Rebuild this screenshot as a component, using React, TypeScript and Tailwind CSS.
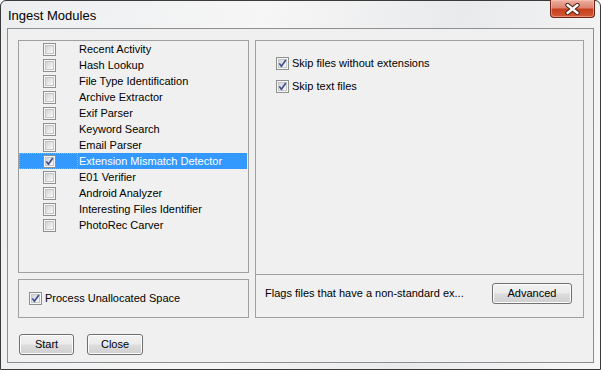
import { useId } from "react";

const modules = [
  { name: "Recent Activity", checked: false },
  { name: "Hash Lookup", checked: false },
  { name: "File Type Identification", checked: false },
  { name: "Archive Extractor", checked: false },
  { name: "Exif Parser", checked: false },
  { name: "Keyword Search", checked: false },
  { name: "Email Parser", checked: false },
  { name: "Extension Mismatch Detector", checked: true },
  { name: "E01 Verifier", checked: false },
  { name: "Android Analyzer", checked: false },
  { name: "Interesting Files Identifier", checked: false },
  { name: "PhotoRec Carver", checked: false },
];

const selectedIndex = 7;

const CheckBox = ({ checked }: { checked: boolean }) => {
  const id = useId();
  return (
    <svg width="13" height="13" viewBox="0 0 13 13" className="block shrink-0">
      <defs>
        <linearGradient id={id} x1="0" y1="0" x2="1" y2="1">
          <stop offset="0" stopColor="#cfd2d7" />
          <stop offset="1" stopColor="#fbfbfb" />
        </linearGradient>
      </defs>
      <rect x="0.5" y="0.5" width="12" height="12" fill="#f6f6f6" stroke="#8e8f8f" />
      <rect x="2.5" y="2.5" width="8" height="8" fill={`url(#${id})`} stroke="#c4c6c9" />
      {checked && (
        <path
          d="M3.3 6.4 L5.4 9.3 L9.8 3"
          fill="none"
          stroke="#3a4f8f"
          strokeWidth="1.6"
          strokeLinejoin="round"
        />
      )}
    </svg>
  );
};

const Button = ({ label, className }: { label: string; className: string }) => (
  <button
    className={
      "h-[21px] rounded-[3px] border border-[#707070] bg-[linear-gradient(#f2f2f2_0%,#ebebeb_48%,#dddddd_52%,#cfcfcf_100%)] text-[11px] text-black shadow-[inset_0_0_0_1px_#fcfcfc] " +
      className
    }
  >
    {label}
  </button>
);

export default function App() {
  return (
    <div
      className="w-[601px] h-[370px] bg-white text-black"
      style={{ fontFamily: '"Liberation Sans", Arial, sans-serif' }}
    >
      <div className="relative w-full h-full border border-[#3a3a3a] rounded-t-[6px] bg-[linear-gradient(100deg,#eceef0_0%,#f6f6f6_40%,#e9eaec_70%,#f7f7f7_100%)] flex flex-col px-[6px] pb-[6px]">
        {/* title bar */}
        <div className="h-[27px] flex items-center pt-[2px] pl-[1px] text-[13px] text-black">
          Ingest Modules
        </div>
        <div className="absolute top-[-1px] right-[5px] w-[45px] h-[18px] rounded-b-[4px] border border-[#6e2416] border-t-0 bg-[linear-gradient(#ebb0a2_0%,#dd8470_45%,#c5401f_55%,#d45a35_100%)] shadow-[inset_0_0_0_1px_rgba(255,200,180,0.5)] flex items-center justify-center">
          <svg width="15" height="12" viewBox="0 0 15 12">
            <path d="M2.5 2 L12.5 10 M12.5 2 L2.5 10" stroke="#4a1c14" strokeWidth="4.4" strokeLinecap="round" />
            <path d="M2.5 2 L12.5 10 M12.5 2 L2.5 10" stroke="#ffffff" strokeWidth="2.4" strokeLinecap="round" />
          </svg>
        </div>

        {/* content */}
        <div className="flex-1 border border-[#8e8e8e] bg-[#f0f0f0] flex flex-col pl-[10px] pt-[11px] pr-[9px] text-[11px]">
          <div className="flex h-[278px] gap-[6px]">
            <div className="w-[231px] flex flex-col gap-[6px]">
              <div className="h-[233px] border border-[#a0a0a0] flex flex-col">
                {modules.map((m, i) => {
                  const sel = i === selectedIndex;
                  return (
                    <div
                      key={m.name}
                      className={"flex h-[16px] mr-[1px] " + (sel ? "bg-[#3399ff] text-white" : "")}
                    >
                      <div
                        className={
                          "w-[59px] flex items-center justify-center pl-[1px] " +
                          (sel ? "border border-dotted border-[#f0a040]" : "")
                        }
                      >
                        <CheckBox checked={m.checked} />
                      </div>
                      <div className="flex items-center pl-[1px]">{m.name}</div>
                    </div>
                  );
                })}
              </div>
              <div className="h-[39px] border border-[#a0a0a0] flex items-center pl-[10px] gap-[3px]">
                <CheckBox checked />
                <span>Process Unallocated Space</span>
              </div>
            </div>

            <div className="w-[329px] border border-[#a0a0a0] flex flex-col">
              <div className="flex-1 flex flex-col pl-[20px] pt-[16px] gap-[10px]">
                <div className="flex items-center h-[13px] gap-[3px]">
                  <CheckBox checked />
                  <span>Skip files without extensions</span>
                </div>
                <div className="flex items-center h-[13px] gap-[3px]">
                  <CheckBox checked />
                  <span>Skip text files</span>
                </div>
              </div>
              <div className="h-[43px] border-t border-[#a0a0a0] flex items-center justify-between pl-[9px] pr-[11px] pt-[8px] pb-[13px]">
                <span>Flags files that have a non-standard ex...</span>
                <Button label="Advanced" className="w-[80px]" />
              </div>
            </div>
          </div>

          <div className="flex mt-[16px] ml-[1px] gap-[13px]">
            <Button label="Start" className="w-[55px]" />
            <Button label="Close" className="w-[56px]" />
          </div>
        </div>
      </div>
    </div>
  );
}
